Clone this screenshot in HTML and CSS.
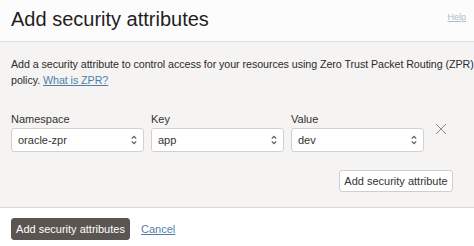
FILE: index.html
```html
<!DOCTYPE html>
<html lang="en">
<head>
  <meta charset="UTF-8" />
  <title>Add security attributes</title>
  <link rel="stylesheet" href="styles.css">
</head>
<body>
  <div class="panel">
    <div class="header">
      <h1>Add security attributes</h1>
      <a class="help" href="#">Help</a>
    </div>

    <div class="body">
      <p class="intro">
        Add a security attribute to control access for your resources using Zero Trust Packet Routing (ZPR)
        policy. <a href="#">What is ZPR?</a>
      </p>

      <div class="row">
        <div class="field">
          <label>Namespace</label>
          <div class="select"><span>oracle-zpr</span><svg viewBox="0 0 6 10" width="6" height="10"><path d="M0.8 3.6 3 1.4 5.2 3.6M0.8 6.4 3 8.6 5.2 6.4" fill="none" stroke="#555" stroke-width="1.2"/></svg></div>
        </div>
        <div class="field">
          <label>Key</label>
          <div class="select"><span>app</span><svg viewBox="0 0 6 10" width="6" height="10"><path d="M0.8 3.6 3 1.4 5.2 3.6M0.8 6.4 3 8.6 5.2 6.4" fill="none" stroke="#555" stroke-width="1.2"/></svg></div>
        </div>
        <div class="field">
          <label>Value</label>
          <div class="select"><span>dev</span><svg viewBox="0 0 6 10" width="6" height="10"><path d="M0.8 3.6 3 1.4 5.2 3.6M0.8 6.4 3 8.6 5.2 6.4" fill="none" stroke="#555" stroke-width="1.2"/></svg></div>
        </div>
        <button class="remove" aria-label="Remove">
          <svg viewBox="0 0 12 12" width="12" height="12"><path d="M1 1 11 11M11 1 1 11" stroke="#8a8a8a" stroke-width="1"/></svg>
        </button>
      </div>

      <div class="actions">
        <button class="btn">Add security attribute</button>
      </div>
    </div>

    <div class="footer">
      <button class="btn primary">Add security attributes</button>
      <a href="#">Cancel</a>
    </div>
  </div>
</body>
</html>
```

FILE: styles.css
```css
* {
  box-sizing: border-box;
  margin: 0;
  padding: 0;
}

body {
  font-family: 'Liberation Sans', Arial, sans-serif;
  background: #fff;
  color: #333;
}

.panel {
  width: 474px;
  height: 246px;
  display: flex;
  flex-direction: column;
}

.header {
  height: 42px;
  background: #fcfcfc;
  border-bottom: 1px solid #dedddb;
  display: flex;
  justify-content: space-between;
  align-items: center;
  padding: 0 8px 2px 11px;
}

h1 {
  font-size: 20px;
  font-weight: normal;
  color: #1f1f1f;
}

.help {
  font-size: 9px;
  color: #a8bcd0;
  text-decoration: underline;
  margin-top: -6px;
}

a {
  color: #4f7fa8;
}

.body {
  background: #f5f4f2;
  border-bottom: 1px solid #d9d8d6;
  padding: 14px 11px 0;
  height: 166px;
}

.intro {
  font-size: 10.7px;
  letter-spacing: -0.06px;
  line-height: 16px;
  color: #2b2b2b;
  margin-right: -14px;
}

.intro a {
  text-decoration: underline;
}

.row {
  display: flex;
  align-items: flex-start;
  gap: 7px;
  margin-top: 24px;
}

.field {
  width: 133px;
}

.field label {
  display: block;
  font-size: 11px;
  color: #333;
  margin-bottom: 2px;
  line-height: 14px;
}

.select {
  height: 24px;
  background: #fff;
  border: 1px solid #d2d1cf;
  border-radius: 3px;
  display: flex;
  align-items: center;
  justify-content: space-between;
  padding: 0 6px;
  font-size: 11px;
  color: #333;
}

.remove {
  background: none;
  border: none;
  margin: 11px 0 0 4px;
  cursor: pointer;
}

.actions {
  display: flex;
  justify-content: flex-end;
  margin-top: 18px;
  padding-right: 10px;
}

.btn {
  font-family: inherit;
  font-size: 11px;
  color: #333;
  background: #fff;
  border: 1px solid #cfcecc;
  border-radius: 3px;
  height: 22px;
  width: 114px;
  padding: 0;
  cursor: pointer;
}

.footer {
  flex: 1;
  background: #fff;
  display: flex;
  align-items: center;
  gap: 11px;
  padding: 4px 11px 0;
}

.btn.primary {
  background: #5b5551;
  border-color: #5b5551;
  color: #fff;
  width: 119px;
}

.footer a {
  font-size: 11px;
  text-decoration: underline;
}
```
